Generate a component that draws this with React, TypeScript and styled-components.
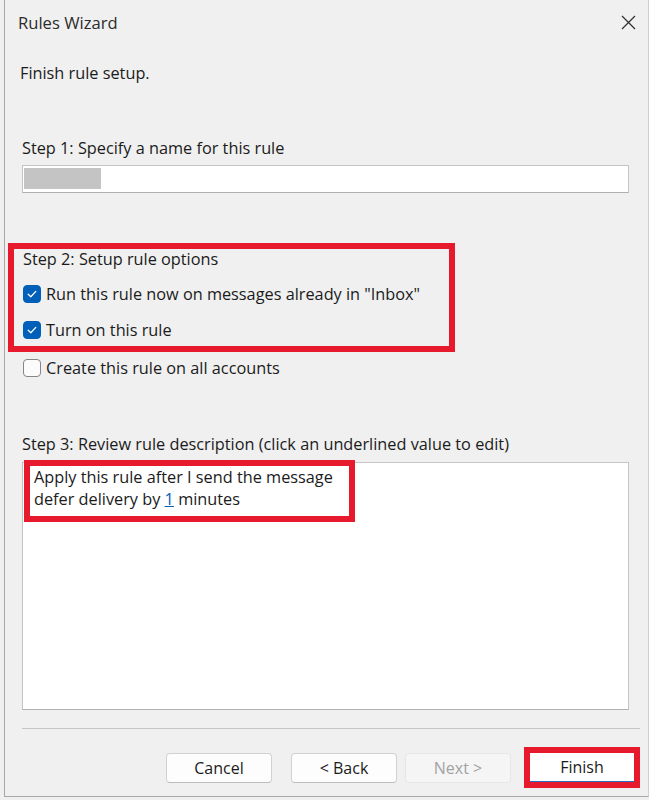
import React from 'react';
import styled, { createGlobalStyle } from 'styled-components';

const GlobalStyle = createGlobalStyle`
  html, body {
    margin: 0;
    padding: 0;
    background: #f0f0f0;
  }
  body {
    font-family: "Open Sans", "Noto Sans", Arial, sans-serif;
    color: #1b1b1b;
  }
`;

const Window = styled.div`
  margin-left: 4px;
  width: 645px;
  height: 797px;
  box-sizing: border-box;
  background: #f0f0f0;
  border-left: 1px solid #a8a8a8;
  border-right: 1px solid #cfcfcf;
  border-bottom: 1px solid #a8a8a8;
  display: flex;
  flex-direction: column;
`;

const TitleBar = styled.div`
  height: 45px;
  display: flex;
  align-items: center;
  justify-content: space-between;
  padding: 0 12px 0 13px;
  font-size: 16.6px;
  color: #2b2b2b;
`;

const CloseButton = styled.button`
  border: none;
  background: transparent;
  padding: 0;
  width: 16px;
  height: 16px;
  display: flex;
  align-items: center;
  justify-content: center;
`;

const Body = styled.div`
  display: flex;
  flex-direction: column;
  padding: 0 19px 0 17px;
  font-size: 16.3px;
  line-height: 20px;
`;

const Subtitle = styled.div`
  margin: 18px 0 0 -2px;
`;

const StepLabel = styled.div<{ $top: number }>`
  margin-top: ${(p) => p.$top}px;
`;

const NameInput = styled.div`
  margin-top: 7px;
  height: 28px;
  box-sizing: border-box;
  background: #fff;
  border: 1px solid #c4c4c4;
  border-bottom-color: #b0b0b0;
  padding: 2px 0 0 1px;
`;

const Redacted = styled.div`
  width: 77px;
  height: 21px;
  background: #c4c4c4;
`;

const Highlight = styled.div`
  border: 6px solid #e6192d;
  box-sizing: border-box;
`;

const OptionsHighlight = styled(Highlight)`
  margin: 50px 0 0 -14px;
  width: 447px;
  height: 109px;
  padding: 0 0 0 9px;
  display: flex;
  flex-direction: column;
`;

const CheckRow = styled.label<{ $top: number; $indent?: number }>`
  display: flex;
  align-items: center;
  gap: 5px;
  margin-top: ${(p) => p.$top}px;
  margin-left: ${(p) => p.$indent ?? 0}px;
  height: 20px;
`;

const Box = styled.span<{ $checked: boolean }>`
  width: 18px;
  height: 18px;
  flex: none;
  box-sizing: border-box;
  border-radius: 4px;
  display: flex;
  align-items: center;
  justify-content: center;
  background: ${(p) => (p.$checked ? '#005fb8' : '#fbfbfb')};
  border: 1px solid ${(p) => (p.$checked ? '#005fb8' : '#858585')};
`;

const DescriptionBox = styled.div`
  margin-top: 8px;
  height: 248px;
  box-sizing: border-box;
  background: #fff;
  border: 1px solid #c4c4c4;
  border-bottom-color: #b0b0b0;
`;

const DescHighlight = styled(Highlight)`
  margin: -3px 0 0 1px;
  width: 331px;
  height: 62px;
  padding: 0 0 0 4px;
  line-height: 22px;
`;

const ValueLink = styled.span`
  color: #0a5fb4;
  text-decoration: underline;
`;

const Footer = styled.div`
  margin: 18px -11px 0 0;
  display: flex;
  flex-direction: column;
`;

const Separator = styled.div`
  height: 1px;
  background: #c6c6c6;
`;

const ButtonRow = styled.div`
  margin-top: 18px;
  display: flex;
  align-items: center;
  justify-content: flex-end;
`;

const Button = styled.button<{ $gap?: number; $disabled?: boolean }>`
  margin-left: ${(p) => p.$gap ?? 0}px;
  width: 106px;
  height: 30px;
  box-sizing: border-box;
  border-radius: 4px;
  font-family: inherit;
  font-size: 16px;
  padding: 0;
  border: 1px solid ${(p) => (p.$disabled ? '#e6e6e6' : '#d1d1d1')};
  border-bottom-color: ${(p) => (p.$disabled ? '#e6e6e6' : '#bcbcbc')};
  background: ${(p) => (p.$disabled ? '#f5f5f5' : '#fdfdfd')};
  color: ${(p) => (p.$disabled ? '#a3a3a3' : '#1b1b1b')};
`;

const FinishHighlight = styled(Highlight)`
  margin-left: 13px;
  width: 116px;
  height: 41px;
  display: flex;
  align-items: center;
  justify-content: center;
`;

const FinishButton = styled(Button)`
  width: 104px;
  height: 29px;
  border-radius: 0;
  border: none;
  border-bottom: 1px solid #2b6cc4;
  background: #fff;
`;

const Check = () => (
  <svg width="12" height="12" viewBox="0 0 12 12">
    <path d="M2.2 6.3 L4.8 8.8 L9.8 3.4" fill="none" stroke="#fff" strokeWidth="1.3" strokeLinecap="round" strokeLinejoin="round" />
  </svg>
);

const CheckOption: React.FC<{ checked: boolean; top: number; indent?: number; children: React.ReactNode }> = ({
  checked,
  top,
  indent,
  children,
}) => (
  <CheckRow $top={top} $indent={indent}>
    <Box $checked={checked}>{checked && <Check />}</Box>
    <span>{children}</span>
  </CheckRow>
);

export default function App() {
  return (
    <>
      <GlobalStyle />
      <Window>
        <TitleBar>
          <span>Rules Wizard</span>
          <CloseButton aria-label="Close">
            <svg width="15" height="15" viewBox="0 0 15 15">
              <path d="M1 1 L14 14 M14 1 L1 14" stroke="#333" strokeWidth="1.3" />
            </svg>
          </CloseButton>
        </TitleBar>
        <Body>
          <Subtitle>Finish rule setup.</Subtitle>

          <StepLabel $top={55}>Step 1: Specify a name for this rule</StepLabel>
          <NameInput>
            <Redacted />
          </NameInput>

          <OptionsHighlight>
            <div>Step 2: Setup rule options</div>
            <CheckOption checked top={15}>
              Run this rule now on messages already in "Inbox"
            </CheckOption>
            <CheckOption checked top={16}>
              Turn on this rule
            </CheckOption>
          </OptionsHighlight>
          <CheckOption checked={false} top={6} indent={1}>
            Create this rule on all accounts
          </CheckOption>

          <StepLabel $top={56}>Step 3: Review rule description (click an underlined value to edit)</StepLabel>
          <DescriptionBox>
            <DescHighlight>
              <div>Apply this rule after I send the message</div>
              <div>
                defer delivery by <ValueLink>1</ValueLink> minutes
              </div>
            </DescHighlight>
          </DescriptionBox>

          <Footer>
            <Separator />
            <ButtonRow>
              <Button>Cancel</Button>
              <Button $gap={19}>&lt; Back</Button>
              <Button $gap={8} $disabled>
                Next &gt;
              </Button>
              <FinishHighlight>
                <FinishButton>Finish</FinishButton>
              </FinishHighlight>
            </ButtonRow>
          </Footer>
        </Body>
      </Window>
    </>
  );
}
